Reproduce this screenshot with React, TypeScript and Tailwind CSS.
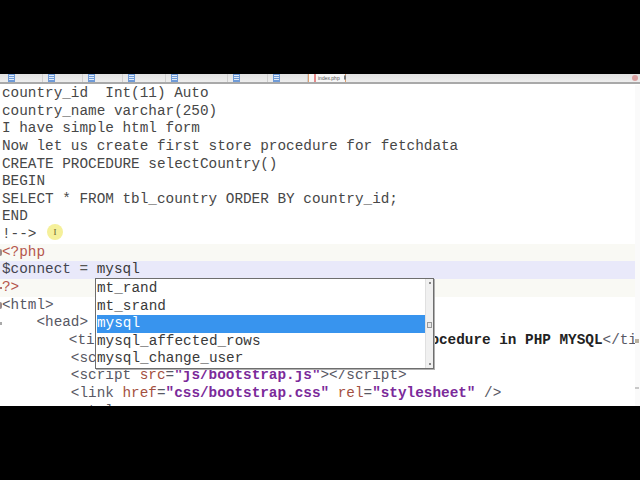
import React from "react";

const mono = "font-['Liberation_Mono','Courier_New',monospace] text-[14.35px] leading-[17.65px]";

function Icon({ active }: { active?: boolean }) {
  return (
    <div className={`w-[7px] h-[8px] flex flex-col gap-[1px] px-[1px] pt-[1px] ${active ? "bg-[#e58a8a]" : "bg-[#6f9bd8]"}`}>
      <div className="h-[1px] bg-white/80" />
      <div className="h-[1px] bg-white/80" />
      <div className="h-[1px] bg-white/80" />
    </div>
  );
}

function Tab({ w, active }: { w: number; active?: boolean }) {
  const widths: Record<number, string> = {
    40: "w-[40px]",
    43: "w-[43px]",
    62: "w-[62px]",
    38: "w-[38px]",
  };
  return (
    <div
      className={`${widths[w]} h-full flex items-start pl-[5px] gap-[2px] border-r border-[#cfcfcf] ${
        active ? "bg-[#f7f7f7] border-l border-l-[#e0a070] border-r-[#e0a070]" : ""
      }`}
    >
      <Icon active={active} />
      {active && (
        <>
          <div className="text-[5px] leading-[8px] text-[#555] font-['Liberation_Sans',sans-serif]">index.php</div>
          <div className="ml-[2px] w-[5px] h-[5px] mt-[1px] rounded-full border border-[#777]" />
        </>
      )}
    </div>
  );
}

function Line({
  children,
  bg,
  fold,
}: {
  children?: React.ReactNode;
  bg?: string;
  fold?: "circle" | "dash" | "dot";
}) {
  return (
    <div className={`flex h-[17.65px] whitespace-pre ${bg ?? ""}`}>
      <div className="w-[2px] flex items-center">
        {fold === "circle" && <div className="w-[2px] h-[7px] bg-[#9a8a8a] rounded-r-full" />}
        {fold === "dash" && <div className="w-[2px] h-[2px] bg-[#b07070]" />}
        {fold === "dot" && <div className="w-[2px] h-[3px] bg-[#aaa]" />}
      </div>
      <div>{children}</div>
    </div>
  );
}

const C = ({ children }: { children: React.ReactNode }) => <span className="text-[#474747]">{children}</span>;
const Php = ({ children }: { children: React.ReactNode }) => <span className="text-[#b5564c]">{children}</span>;
const Tag = ({ children }: { children: React.ReactNode }) => <span className="text-[#585864]">{children}</span>;
const Attr = ({ children }: { children: React.ReactNode }) => <span className="text-[#a4503f]">{children}</span>;
const Str = ({ children }: { children: React.ReactNode }) => <span className="text-[#7b2a9a] font-bold">{children}</span>;

export default function App() {
  const items = ["mt_rand", "mt_srand", "mysql", "mysql_affected_rows", "mysql_change_user"];
  return (
    <div className="w-[640px] h-[480px] bg-black flex flex-col overflow-hidden">
      <div className="h-[74px] bg-black" />
      {/* tab strip */}
      <div className="h-[10px] flex flex-col">
        <div className="h-[8px] flex bg-gradient-to-b from-[#e2e2e2] to-[#eeeeee] overflow-hidden">
          <div className="w-[3px]" />
          <Tab w={40} />
          <Tab w={40} />
          <Tab w={40} />
          <Tab w={43} />
          <Tab w={62} />
          <Tab w={40} />
          <Tab w={40} />
          <Tab w={38} active />
          <div className="flex-1" />
          <div className="w-[6px] h-[6px] mr-[2px] mt-[1px] rounded-full bg-[#d9a0a0]" />
        </div>
        <div className="h-[2px] bg-[#a9a9a9]" />
      </div>
      {/* editor */}
      <div className={`relative h-[322px] pt-[1px] bg-white flex ${mono}`}>
        <div className="flex-1 overflow-hidden">
          <Line><C>country_id  Int(11) Auto</C></Line>
          <Line><C>country_name varchar(250)</C></Line>
          <Line><C>I have simple html form</C></Line>
          <Line><C>Now let us create first store procedure for fetchdata</C></Line>
          <Line><C>CREATE PROCEDURE selectCountry()</C></Line>
          <Line><C>BEGIN</C></Line>
          <Line><C>SELECT * FROM tbl_country ORDER BY country_id;</C></Line>
          <Line><C>END</C></Line>
          <Line><C>!--&gt;</C></Line>
          <Line bg="bg-[#f9f9f4]" fold="circle"><Php>&lt;?php</Php></Line>
          <Line bg="bg-[#e9e9fa]">
            <span className="text-[#44444f]">$connect</span>
            <span className="text-[#555]"> = </span>
            <span className="text-[#3a3a3a]">mysql</span>
          </Line>
          <Line bg="bg-[#f9f9f4]" fold="dash"><Php>?&gt;</Php></Line>
          <Line fold="circle"><Tag>&lt;html&gt;</Tag></Line>
          <Line fold="dot"><Tag>    &lt;head&gt;</Tag></Line>
          <Line>
            <Tag>        &lt;title&gt;</Tag>
            <span className="font-bold text-[#222]">Fetch Data from Table with Store Procedure in PHP MYSQL</span>
            <Tag>&lt;/title&gt;</Tag>
          </Line>
          <Line>
            <Tag>        &lt;script </Tag>
            <Attr>src</Attr>
            <Tag>=</Tag>
            <Str>"js/jquery.js"</Str>
            <Tag>&gt;&lt;/script&gt;</Tag>
          </Line>
          <Line>
            <Tag>        &lt;script </Tag>
            <Attr>src</Attr>
            <Tag>=</Tag>
            <Str>"js/bootstrap.js"</Str>
            <Tag>&gt;&lt;/script&gt;</Tag>
          </Line>
          <Line>
            <Tag>        &lt;link </Tag>
            <Attr>href</Attr>
            <Tag>=</Tag>
            <Str>"css/bootstrap.css"</Str>
            <Tag> </Tag>
            <Attr>rel</Attr>
            <Tag>=</Tag>
            <Str>"stylesheet"</Str>
            <Tag> /&gt;</Tag>
          </Line>
          <Line><Tag>        &lt;style&gt;</Tag></Line>
        </div>
        {/* error stripe */}
        <div className="w-[5px] flex flex-col bg-[#fafafa]">
          <div className="h-[254px]" />
          <div className="h-[4px] w-[4px] bg-[#b8b0a0]" />
          <div className="h-[44px]" />
          <div className="h-[2px] w-[4px] bg-[#c8c8c8]" />
        </div>

        {/* mouse highlight */}
        <div className="absolute left-[47px] top-[140px] w-[16px] h-[16px] rounded-full bg-[#f5f09a] flex items-center justify-center">
          <span className="font-['Liberation_Serif',serif] text-[9px] leading-[9px] text-[#6a5a2a]">I</span>
        </div>

        {/* completion popup */}
        <div className="absolute left-[95px] top-[194px] w-[339px] h-[91px] border border-[#6e6e6e] shadow-[1px_1px_0_#b0b0b0] bg-white flex">
          <div className="flex-1 pt-[1px] pl-[1px]">
            {items.map((it, i) => (
              <div
                key={it}
                className={`h-[17.6px] whitespace-pre ${
                  i === 2 ? "bg-[#3894ee] text-white" : "text-[#3a3a3a]"
                }`}
              >
                {it}
              </div>
            ))}
          </div>
          <div className="w-[8px] bg-[#f0f0f0] border-l border-[#e0e0e0] flex flex-col items-center justify-between py-[3px]">
            <div className="w-[2px] h-[2px] bg-[#888]" />
            <div className="w-[5px] h-[6px] mt-[38px] border border-[#999] bg-[#e8e8e8]" />
            <div className="flex-1" />
            <div className="w-[2px] h-[2px] bg-[#888]" />
          </div>
        </div>
      </div>
      <div className="flex-1 bg-black" />
    </div>
  );
}
